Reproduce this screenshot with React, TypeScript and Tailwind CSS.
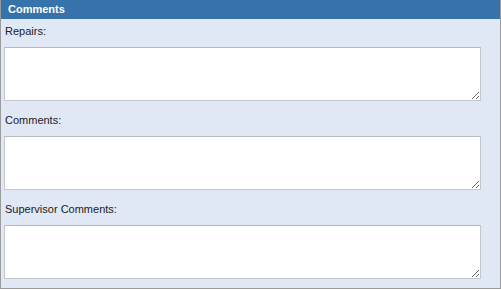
import React from 'react';

const fields = ['Repairs:', 'Comments:', 'Supervisor Comments:'];

const App: React.FC = () => {
  return (
    <div className="w-[501px] h-[290px] bg-white font-['Liberation_Sans',Arial,sans-serif]">
      <div className="w-[501px] h-[289px] border-x border-b border-[#9b9b9b] bg-[#e0e7f5] flex flex-col">
        <div className="h-[19px] bg-[#3673aa] text-white text-[11px] font-bold leading-[19px] pl-[7px]">
          Comments
        </div>
        <div className="flex flex-col pl-[3px] pt-[5px] gap-[12px]">
          {fields.map((f) => (
            <div key={f} className="flex flex-col">
              <label className="text-[11px] leading-[14px] text-[#222] h-[14px] mb-[9px] pl-[1px]">{f}</label>
              <textarea className="w-[477px] h-[54px] bg-white border border-[#c3c6ca] border-t-[#b5b8bc] outline-none resize" />
            </div>
          ))}
        </div>
      </div>
    </div>
  );
};

export default App;
